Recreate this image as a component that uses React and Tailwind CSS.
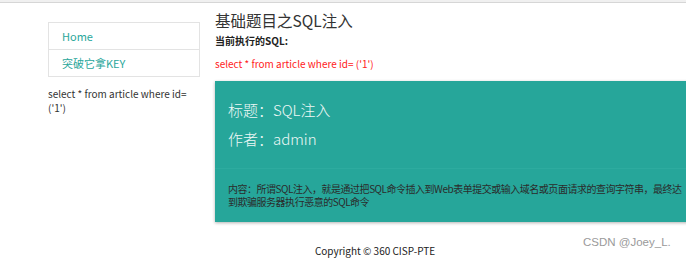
import React from 'react';

const font = { fontFamily: '"Noto Sans CJK SC", "Noto Sans", sans-serif' };

const NavBox = () => (
  <div className="border border-[#e3e3e3] bg-white">
    <div className="h-[27px] flex items-center pl-[13px] text-[11px] text-[#2aa79b] border-b border-[#e3e3e3]">
      Home
    </div>
    <div className="h-[26px] flex items-center pl-[13px] text-[11px] text-[#2aa79b]">
      突破它拿KEY
    </div>
  </div>
);

const ArticlePanel = () => (
  <div className="w-[490px] bg-[#26a69a] shadow-[0_1px_3px_rgba(0,0,0,0.3)]">
    {/* heading */}
    <div className="pl-[13px] pt-[18px] pb-[18px] border-b border-[#2dab9f] text-[#eef8f6] font-light">
      <div className="text-[15px] leading-[22px]">标题：SQL注入</div>
      <div className="text-[15px] leading-[22px] mt-[7px]">作者：admin</div>
    </div>
    {/* body */}
    <div className="pl-[13px] pr-[6px] pt-[13px] pb-[14px] text-[10px] leading-[13px] tracking-[-0.48px] text-[#2b2b2b] w-[480px]">
      内容：所谓SQL注入，就是通过把SQL命令插入到Web表单提交或输入域名或页面请求的查询字符串，最终达到欺骗服务器执行恶意的SQL命令
    </div>
  </div>
);

export default function App() {
  return (
    <div className="relative w-[686px] h-[258px] overflow-hidden bg-white text-[#333]" style={font}>
      <div className="h-[2px] bg-[#f0f0f0] border-b border-[#d6d6d6] box-content" />

      <div className="flex pl-[48px]">
        {/* left column */}
        <div className="w-[152px] shrink-0 pt-[19px]">
          <NavBox />
          <div className="mt-[10px] text-[10px] leading-[14px]">
            select * from article where id= ('1')
          </div>
        </div>

        {/* right column */}
        <div className="ml-[15px] shrink-0 pt-[6px]">
          <h2 className="text-[15.5px] leading-[22px]">基础题目之SQL注入</h2>
          <div className="mt-[3px] text-[10px] leading-[14px] font-bold text-[#222]">当前执行的SQL:</div>
          <div className="mt-[9px] text-[10px] leading-[14px] text-[#ff1a1a]">select * from article where id= ('1')</div>
          <div className="mt-[10px]">
            <ArticlePanel />
          </div>
        </div>
      </div>

      <div className="ml-[48px] w-[654px] text-center mt-[22px] text-[10px] leading-[14px] text-[#222]">
        Copyright © 360 CISP-PTE
      </div>

      <div
        className="absolute left-[583px] top-[234px] text-[11.5px] text-[#9a9a9a]"
        style={{ fontFamily: '"Liberation Sans", Arial, sans-serif' }}
      >
        CSDN @Joey_L.
      </div>
    </div>
  );
}
